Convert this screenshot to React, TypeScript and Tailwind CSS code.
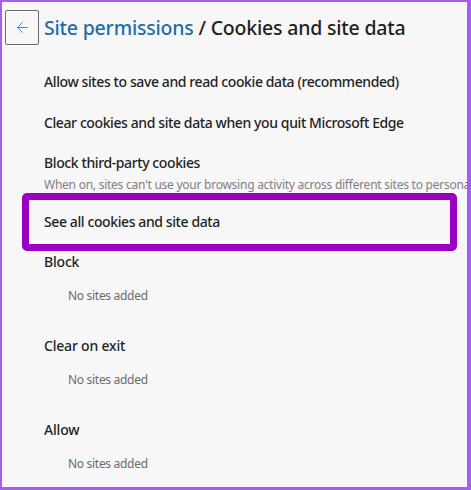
import { ArrowLeft } from "lucide-react";

const font = { fontFamily: '"Segoe UI", "Noto Sans", sans-serif' };

function Section({ title }: { title: string }) {
  return (
    <div className="flex flex-col">
      <p className="h-[22px] text-[14px] font-medium leading-[22px] tracking-[-0.2px] text-[#1f1f1f]">{title}</p>
      <p className="mt-[14px] h-[18px] pl-[24px] text-[12px] leading-[18px] tracking-[-0.3px] text-[#6b6b6b]">No sites added</p>
    </div>
  );
}

export default function App() {
  return (
    <div
      className="h-[490px] w-[471px] overflow-hidden border-t-2 border-r-4 border-b-[3px] border-l-2 border-[#a95cf0] bg-[#f7f7f7]"
      style={font}
    >
      <div className="flex items-center gap-[5px] pl-[3px] pt-[8px]">
        <button
          type="button"
          className="flex h-[35px] w-[34px] items-center justify-center rounded-[2px] border-[1.5px] border-[#6b6b6b]"
        >
          <ArrowLeft className="h-[17px] w-[17px] text-[#3a7bb8]" strokeWidth={1.25} />
        </button>
        <h1 className="whitespace-nowrap text-[19.5px] font-medium leading-[28px] tracking-[-0.2px] text-[#1f1f1f]">
          <span className="text-[#1f6ea8]">Site permissions</span> / Cookies and site data
        </h1>
      </div>

      <div className="flex flex-col pl-[42px] pt-[26px]">
        <p className="h-[22px] whitespace-nowrap text-[14px] font-medium leading-[22px] tracking-[-0.4px] text-[#1f1f1f]">
          Allow sites to save and read cookie data (recommended)
        </p>
        <p className="mt-[19px] h-[22px] whitespace-nowrap text-[14px] font-medium leading-[22px] tracking-[-0.4px] text-[#1f1f1f]">
          Clear cookies and site data when you quit Microsoft Edge
        </p>
        <p className="mt-[18px] h-[22px] whitespace-nowrap text-[14px] font-medium leading-[22px] tracking-[-0.4px] text-[#1f1f1f]">
          Block third-party cookies
        </p>
        <p className="mt-[1px] h-[20px] whitespace-nowrap text-[12px] leading-[20px] tracking-[-0.25px] text-[#808080]">
          When on, sites can't use your browsing activity across different sites to personalize ads
        </p>
      </div>

      <div className="ml-[20px] mr-[10px] mt-[-2px] rounded-[5px] border-[7px] border-[#9b00c2] py-[10px] pl-[15px]">
        <p className="h-[24px] whitespace-nowrap text-[14px] font-medium leading-[24px] tracking-[-0.4px] text-[#1f1f1f]">
          See all cookies and site data
        </p>
      </div>

      <div className="flex flex-col gap-[30px] pl-[42px] pt-[0px]">
        <Section title="Block" />
        <Section title="Clear on exit" />
        <Section title="Allow" />
      </div>
    </div>
  );
}
